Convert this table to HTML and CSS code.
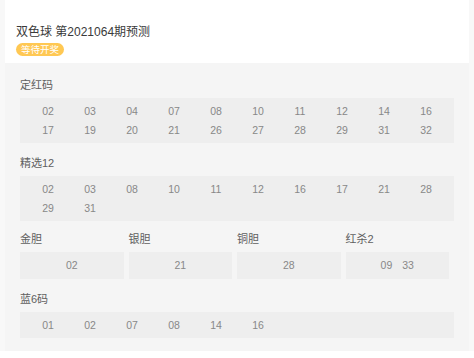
FILE: index.html
```html
<!DOCTYPE html>
<html lang="zh-CN">
<head>
<meta charset="utf-8">
<link rel="stylesheet" href="styles.css">
</head>
<body>
<div class="page">
  <div class="card">
    <div class="header">
      <div class="title">双色球 第2021064期预测</div>
      <span class="badge">等待开奖</span>
    </div>
    <div class="content">
      <div class="section s1">
        <div class="label">定红码</div>
        <div class="nums">
          <span>02</span><span>03</span><span>04</span><span>07</span><span>08</span><span>10</span><span>11</span><span>12</span><span>14</span><span>16</span>
          <span>17</span><span>19</span><span>20</span><span>21</span><span>26</span><span>27</span><span>28</span><span>29</span><span>31</span><span>32</span>
        </div>
      </div>
      <div class="section s2">
        <div class="label">精选12</div>
        <div class="nums">
          <span>02</span><span>03</span><span>08</span><span>10</span><span>11</span><span>12</span><span>16</span><span>17</span><span>21</span><span>28</span>
          <span>29</span><span>31</span>
        </div>
      </div>
      <div class="section s3 quad">
        <div class="cell">
          <div class="label">金胆</div>
          <div class="mini"><span>02</span></div>
        </div>
        <div class="cell">
          <div class="label">银胆</div>
          <div class="mini"><span>21</span></div>
        </div>
        <div class="cell">
          <div class="label">铜胆</div>
          <div class="mini"><span>28</span></div>
        </div>
        <div class="cell">
          <div class="label">红杀2</div>
          <div class="mini"><span>09</span><span>33</span></div>
        </div>
      </div>
      <div class="section s4">
        <div class="label">蓝6码</div>
        <div class="nums single">
          <span>01</span><span>02</span><span>07</span><span>08</span><span>14</span><span>16</span>
        </div>
      </div>
    </div>
  </div>
</div>
</body>
</html>
```
FILE: styles.css
```css
html, body {
  margin: 0;
  padding: 0;
  background: #ffffff;
  font-family: "Liberation Sans", "Noto Sans CJK SC", sans-serif;
}
.page {
  background: #f8f8f8;
  padding: 0 5px;
}
.card {
  width: 464px;
}
.header {
  background: #ffffff;
  height: 63px;
  padding: 24px 0 0 11px;
  box-sizing: border-box;
}
.title {
  font-size: 12px;
  line-height: 16px;
  color: #3a3a3a;
}
.badge {
  display: inline-block;
  margin-top: 3px;
  height: 13px;
  line-height: 13px;
  padding: 0 5px;
  border-radius: 7px;
  background: #ffc853;
  color: #ffffff;
  font-size: 9.5px;
  vertical-align: top;
}
.content {
  background: #f5f5f5;
  padding: 2px 15px 13px;
}
.section {
  margin-top: 10px;
}
.s3 {
  margin-top: 8px;
}
.label {
  font-size: 11px;
  line-height: 20px;
  color: #606060;
}
.nums {
  margin-top: 3px;
  background: #eeeeee;
  display: grid;
  grid-template-columns: repeat(10, 42px);
  padding: 4px 7px;
  font-size: 10.5px;
  line-height: 18.5px;
  color: #888888;
  text-align: center;
}
.nums.single {
  line-height: 18px;
  margin-top: 3px;
}
.quad {
  display: grid;
  grid-template-columns: repeat(4, 1fr);
}
.cell {
  padding-right: 5px;
}
.mini {
  margin-top: 3px;
  background: #eeeeee;
  display: flex;
  justify-content: center;
  gap: 10px;
  padding: 4px 0;
  font-size: 10.5px;
  line-height: 19px;
  color: #888888;
}
```
